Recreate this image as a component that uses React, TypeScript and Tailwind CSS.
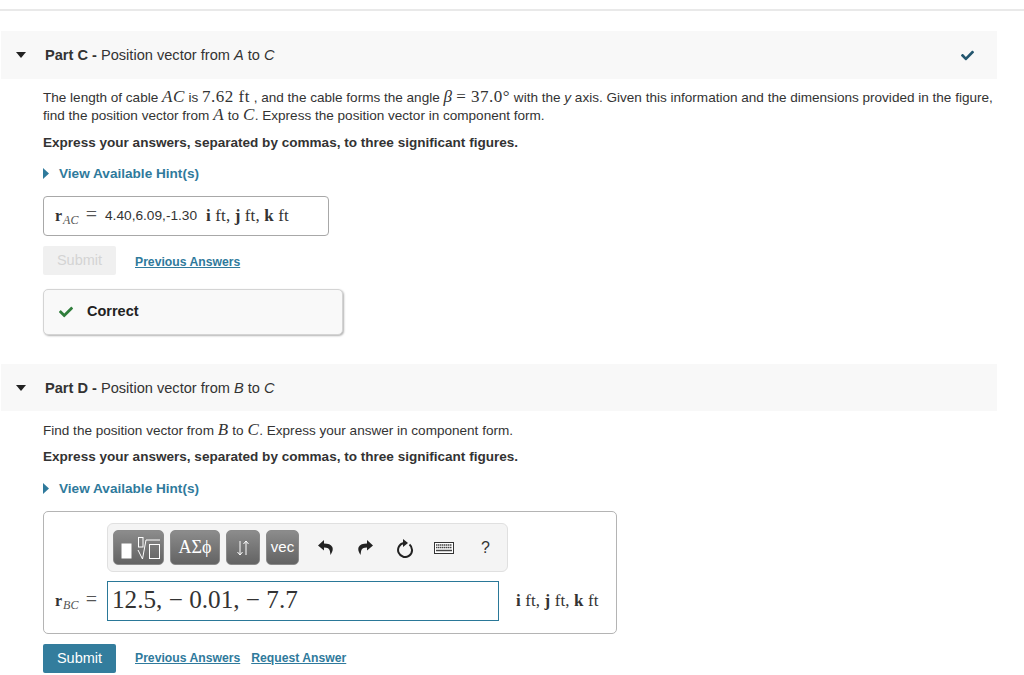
import { FaCheck } from "react-icons/fa";

const sans = "font-['Liberation_Sans',Arial,sans-serif]";
const serif = "font-['Liberation_Serif','Times_New_Roman',serif]";

function Caret() {
  return (
    <svg width="10" height="6" viewBox="0 0 10 6" className="shrink-0">
      <path d="M0 0h10L5 6z" fill="#222" />
    </svg>
  );
}

function PartHeader({ label, from, to, done, tall }: { label: string; from: string; to: string; done?: boolean; tall?: boolean }) {
  return (
    <div className={`ml-px flex w-[996px] items-center bg-[#f8f8f8] pl-[15px] pr-[23px] ${tall ? "h-[48px]" : "h-[47px]"}`}>
      <Caret />
      <p className={`ml-[19px] text-[14.6px] text-[#333] ${tall ? "pt-[1px]" : "pt-[2px]"}`}>
        <b>{label} - </b>Position vector from <i>{from}</i> to <i>{to}</i>
      </p>
      {done && <FaCheck className="ml-auto text-[13px] text-[#23566e]" />}
    </div>
  );
}

function Hint() {
  return (
    <div className="flex items-center text-[13.6px] leading-[17px] font-bold text-[#2f7a9c]">
      <svg width="6" height="11" viewBox="0 0 6 11">
        <path d="M0 0l6 5.5L0 11z" fill="#2f7a9c" />
      </svg>
      <span className="ml-[10px]">View Available Hint(s)</span>
    </div>
  );
}

function M({ children }: { children: React.ReactNode }) {
  return <span className={`${serif} text-[17px] leading-none tracking-[0.5px] italic`}>{children}</span>;
}

function N({ children }: { children: React.ReactNode }) {
  return <span className={`${serif} text-[17px] leading-none tracking-[0.5px]`}>{children}</span>;
}

function Units() {
  return (
    <span className={`${serif} text-[17px] tracking-[0.12px] text-[#333]`}>
      <b>i</b> ft, <b>j</b> ft, <b>k</b> ft
    </span>
  );
}

function Symbol({ sub }: { sub: string }) {
  return (
    <span className={`${serif} flex w-[42px] shrink-0 items-baseline text-[16px] text-[#333]`}>
      <b className="mr-[1px]">r</b>
      <i className="relative top-[3px] text-[12px] text-[#555]">{sub}</i>
      <span className="ml-auto text-[20px] leading-none text-[#555]">=</span>
    </span>
  );
}

function Link({ children }: { children: React.ReactNode }) {
  return <a className="text-[12.2px] font-bold text-[#2f7a9c] underline">{children}</a>;
}

function ToolButton({ className, children }: { className: string; children: React.ReactNode }) {
  return (
    <div className={`flex h-[35px] items-center justify-center rounded-[5px] border border-[#8a8a8a] bg-gradient-to-b from-[#8c8c8c] to-[#636363] text-white ${className}`}>
      {children}
    </div>
  );
}

function ReplyIcon({ className }: { className?: string }) {
  return (
    <svg width="15" height="15" viewBox="0 0 15 15" className={className}>
      <path d="M6 0L0 5.5 6 10.5V7.4c3.4 0 5.4 1 5.9 3.6l.6 4c2-3 2.8-5.6 1.8-8.1C13.2 4.5 10 3.4 6 3.4z" fill="#222" />
    </svg>
  );
}

function Toolbar() {
  return (
    <div className="ml-[63px] flex h-[49px] w-[401px] items-center rounded-[6px] border border-[#e0e0e0] bg-[#f4f4f4] pl-[5px]">
      <div className="flex gap-[6px]">
        <ToolButton className="w-[51px]">
          <svg width="46" height="30" viewBox="0 0 46 30">
            <rect x="5.5" y="10.5" width="10" height="15" fill="#fff" />
            <path d="M22 17l4.5 9 3.5-19h14" fill="none" stroke="#fff" strokeWidth="1" />
            <rect x="22.5" y="4.5" width="4.5" height="9.5" fill="none" stroke="#fff" strokeWidth="1" />
            <rect x="33.5" y="11.5" width="10" height="14" fill="none" stroke="#fff" strokeWidth="1" />
          </svg>
        </ToolButton>
        <ToolButton className={`w-[50px] ${serif} text-[18px]`}>ΑΣϕ</ToolButton>
        <ToolButton className="w-[34px]">
          <svg width="16" height="16" viewBox="0 0 16 16" fill="none" stroke="#fff" strokeWidth="1">
            <path d="M5 1v14M2.5 12l2.5 3 2.5-3M11 15V1M8.5 4L11 1l2.5 3" />
          </svg>
        </ToolButton>
        <ToolButton className={`w-[33px] ${sans} text-[15px]`}>vec</ToolButton>
      </div>
      <div className="ml-[19px] flex items-center text-[#222]">
        <ReplyIcon />
        <ReplyIcon className="ml-[25px] -scale-x-100" />
        <svg width="18" height="20" viewBox="0 0 18 20" className="ml-[23px]">
          <path d="M8 5.1A7 7 0 1 0 13.5 6.6" fill="none" stroke="#222" strokeWidth="2" />
          <path d="M7 1l5 4-5 4z" fill="#222" />
        </svg>
        <svg width="20" height="12" viewBox="0 0 20 12" className="ml-[20px]">
          <rect x="0.5" y="0.5" width="19" height="11" fill="#fff" stroke="#333" />
          <path d="M2 3h16M2 5.5h16" stroke="#444" strokeWidth="1.5" strokeDasharray="1.5 .5" />
          <path d="M2 8.5h16" stroke="#444" strokeWidth="1.5" />
        </svg>
        <span className="ml-[27px] text-[16px] text-[#333]">?</span>
      </div>
    </div>
  );
}

export default function App() {
  return (
    <div className={`${sans} h-[675px] overflow-hidden bg-white text-[#333]`}>
      <div className="h-[11px] border-b-2 border-[#e9e9e9]" />
      <div className="mt-[20px]">
        <PartHeader label="Part C" from="A" to="C" done tall />
      </div>

      <div className="px-[43px]">
        <p className="mt-[9px] w-[955px] text-[13.55px] leading-[17px]">
          The length of cable <M>AC</M> is <N>7.62 ft</N> , and the cable forms the angle <M>β</M> <N>= 37.0°</N> with the <i>y</i> axis. Given this information and the dimensions provided in the figure, find the position vector from <M>A</M> to <M>C</M>. Express the position vector in component form.
        </p>
        <p className="mt-[10px] text-[13.55px] leading-[17px] font-bold">Express your answers, separated by commas, to three significant figures.</p>
        <div className="mt-[14px]">
          <Hint />
        </div>

        <div className="mt-[14px] flex h-[40px] w-[286px] items-center rounded-[4px] border border-[#a8a8a8] pl-[11px]">
          <Symbol sub="AC" />
          <span className="ml-[8px] text-[13.7px]">4.40,6.09,-1.30</span>
          <span className="ml-[9px]"><Units /></span>
        </div>

        <div className="mt-[10px] flex items-center">
          <div className="flex h-[29px] w-[73px] items-center justify-center rounded-[2px] bg-[#f0f0f0] text-[14.5px] text-[#d4d4d4]">Submit</div>
          <div className="ml-[19px]"><Link>Previous Answers</Link></div>
        </div>

        <div className="mt-[14px] flex h-[46px] w-[300px] items-center rounded-[5px] border border-[#d4d4d4] bg-[#f9f9f9] pl-[15px] shadow-[1px_1px_2px_rgba(0,0,0,0.3)]">
          <FaCheck className="text-[14px] text-[#2f7d3b]" />
          <span className="ml-[14px] text-[14.5px] font-bold text-[#222]">Correct</span>
        </div>
      </div>

      <div className="mt-[29px]">
        <PartHeader label="Part D" from="B" to="C" />
      </div>

      <div className="px-[43px]">
        <p className="mt-[10px] text-[13.55px] leading-[17px]">
          Find the position vector from <M>B</M> to <M>C</M>. Express your answer in component form.
        </p>
        <p className="mt-[9px] text-[13.55px] leading-[17px] font-bold">Express your answers, separated by commas, to three significant figures.</p>
        <div className="mt-[15px]">
          <Hint />
        </div>

        <div className="mt-[14px] h-[123px] w-[574px] rounded-[5px] border border-[#b4b4b4] pt-[11px]">
          <Toolbar />
          <div className="mt-[9px] flex items-center pl-[11px]">
            <Symbol sub="BC" />
            <div className={`ml-[10px] flex h-[40px] w-[392px] shrink-0 items-center border border-[#2a7898] pb-[2px] pl-[4px] ${serif} text-[25.2px] text-[#333]`}>
              12.5, − 0.01, − 7.7
            </div>
            <span className="ml-[17px]"><Units /></span>
          </div>
        </div>

        <div className="mt-[10px] flex items-center">
          <div className="flex h-[29px] w-[73px] items-center justify-center rounded-[2px] bg-[#337d9d] text-[14.5px] text-white">Submit</div>
          <div className="ml-[19px] flex gap-[11px]">
            <Link>Previous Answers</Link>
            <Link>Request Answer</Link>
          </div>
        </div>
      </div>
    </div>
  );
}
